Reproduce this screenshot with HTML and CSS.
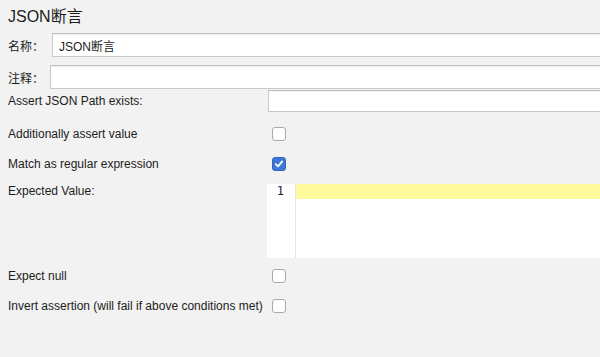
FILE: index.html
```html
<!DOCTYPE html>
<html lang="zh">
<head>
    <meta charset="UTF-8">
    <title>JSON断言</title>
    <link rel="stylesheet" href="styles.css">
</head>
<body>
    <div class="panel">
        <div class="title">JSON断言</div>

        <div class="field-row name-row">
            <label class="field-label name-label">名称：</label>
            <input type="text" class="text-input" value="JSON断言">
        </div>
        <div class="field-row comment-row">
            <label class="field-label comment-label">注释：</label>
            <input type="text" class="text-input" value="">
        </div>

        <div class="form-grid">
            <div class="opt-row path-row">
                <span class="opt-label">Assert JSON Path exists:</span>
                <input type="text" class="text-input path-input" value="">
            </div>
            <div class="opt-row">
                <span class="opt-label">Additionally assert value</span>
                <span class="check"></span>
            </div>
            <div class="opt-row">
                <span class="opt-label">Match as regular expression</span>
                <span class="check checked">
                    <svg width="10" height="10" viewBox="0 0 10 10"><path d="M1.8 5.2 L4 7.4 L8.2 2.4" fill="none" stroke="#fff" stroke-width="1.8" stroke-linecap="round" stroke-linejoin="round"/></svg>
                </span>
            </div>
            <div class="opt-row editor-row">
                <span class="opt-label editor-label">Expected Value:</span>
                <div class="editor">
                    <div class="gutter">1</div>
                    <div class="code">
                        <div class="current-line"></div>
                    </div>
                </div>
            </div>
            <div class="opt-row null-row">
                <span class="opt-label">Expect null</span>
                <span class="check"></span>
            </div>
            <div class="opt-row">
                <span class="opt-label">Invert assertion (will fail if above conditions met)</span>
                <span class="check"></span>
            </div>
        </div>
    </div>
</body>
</html>
```

FILE: styles.css
```css
html, body {
    margin: 0;
    padding: 0;
    background: #f2f2f2;
}
body {
    font-family: "Liberation Sans", Arial, "Noto Sans CJK SC", sans-serif;
    font-size: 12px;
    color: #1c1c1c;
    overflow: hidden;
}
.panel {
    width: 600px;
    height: 357px;
    padding-left: 8px;
    box-sizing: border-box;
}
.title {
    height: 33px;
    line-height: 33px;
    font-size: 16px;
}
.field-row {
    display: flex;
    align-items: center;
    height: 24px;
}
.name-row {
    margin-bottom: 8px;
}
.field-label {
    flex: none;
    font-size: 12px;
}
.name-label {
    width: 44px;
}
.comment-label {
    width: 42px;
}
.text-input {
    flex: 1;
    height: 24px;
    box-sizing: border-box;
    margin: 0 -2px 0 0;
    padding: 0 6px;
    border: 1px solid #c8c8c8;
    border-right: none;
    border-top-color: #bdbdbd;
    box-shadow: inset 0 1px 1px rgba(0, 0, 0, 0.06);
    background: #fff;
    font-family: "Liberation Sans", Arial, "Noto Sans CJK SC", sans-serif;
    font-size: 12px;
    color: #1c1c1c;
    outline: none;
}
.form-grid {
    margin-top: 1px;
}
.opt-row {
    display: flex;
    align-items: center;
    height: 30px;
}
.path-row {
    height: 22px;
    margin-bottom: 7px;
}
.path-input {
    height: 22px;
}
.opt-label {
    flex: none;
    width: 260px;
}
.check {
    flex: none;
    width: 14px;
    height: 14px;
    margin-left: 4px;
    box-sizing: border-box;
    border: 1px solid #a9a9a9;
    border-radius: 3px;
    background: #fff;
    display: flex;
    align-items: center;
    justify-content: center;
}
.check.checked {
    background: #3b79d4;
    border-color: #2f66bc;
}
.editor-row {
    height: 74px;
    align-items: flex-start;
    margin-top: 5px;
}
.editor-label {
    line-height: 15px;
}
.editor {
    flex: 1;
    display: flex;
    height: 74px;
    margin-left: -1px;
    background: #fff;
}
.gutter {
    width: 29px;
    box-sizing: border-box;
    padding-right: 11px;
    border-right: 1px solid #e6e6e6;
    font-family: "DejaVu Sans Mono", monospace;
    font-size: 12px;
    line-height: 15px;
    color: #1e1e3c;
    text-align: right;
}
.code {
    flex: 1;
}
.current-line {
    height: 15px;
    background: #fffa9e;
}
.null-row {
    margin-top: 3px;
}
```
